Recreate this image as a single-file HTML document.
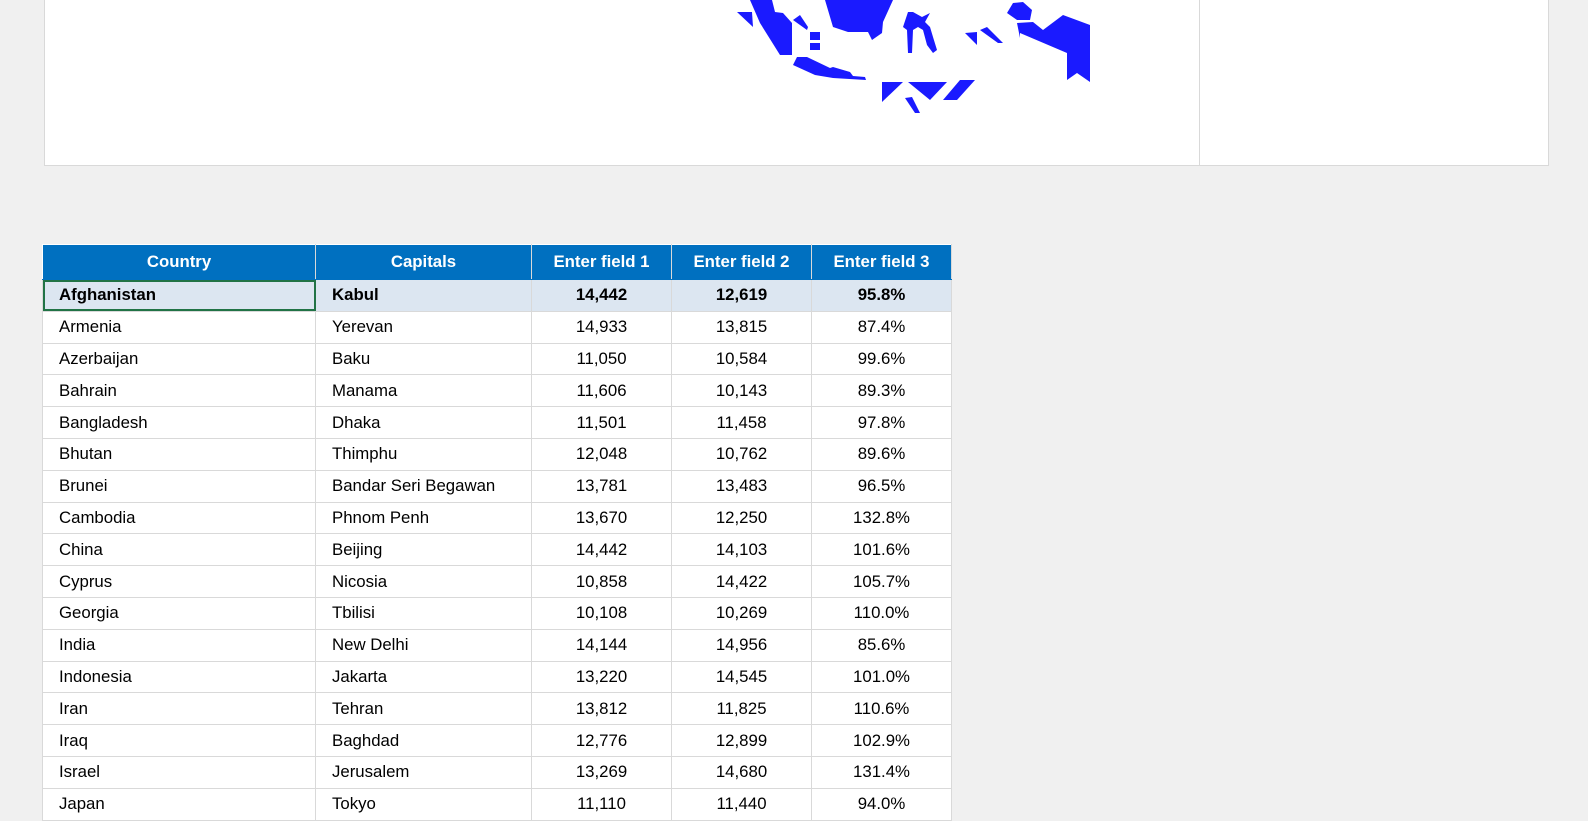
<!DOCTYPE html>
<html><head><style>
body{margin:0;width:1588px;height:802px;background:#f0f0f0;overflow:hidden;position:relative;font-family:"Liberation Sans",Arial,sans-serif}
.panel{position:absolute;left:44px;top:-1px;width:1503px;height:165px;background:#fff;border:1px solid #d9d9d9}
.div{position:absolute;left:1154px;top:0;width:1px;height:165px;background:#d9d9d9}
table{position:absolute;left:42px;top:244px;border-collapse:collapse;font-size:16.8px;color:#000;table-layout:fixed;width:909px}
td,th{border:1px solid #d9d9d9;padding:0;white-space:nowrap;overflow:hidden}
tr{height:31.8px}
tr.h{height:35px}
th{background:#0070c0;color:#fff;font-weight:bold;border-color:#fff #d9d9d9 #0070c0 #fff}
td{background:#fff}
td.l{padding-left:16px}
td.c{text-align:center}
tr.sel td{background:#dce6f1;font-weight:bold}
tr.sel td:first-child{outline:2px solid #217346;outline-offset:-2px}
</style></head><body>
<div class="panel"><div class="div"></div>
<svg width="1503" height="165" style="position:absolute;left:0;top:0" viewBox="45 0 1503 165">
<g fill="#1a1aff">
<polygon points="750,0 772,0 775,12 783,13 792,23 792,55 780,55 760,23"/>
<polygon points="737,12 752,12 753,27"/>
<polygon points="793,20 800,15 808,27 807,30"/>
<rect x="810" y="32" width="10" height="8"/><rect x="810" y="43" width="10" height="7"/>
<polygon points="825,0 893,0 883,22 882,33 872,40 868,32 848,32 833,27"/>
<polygon points="797,57 807,57 830,68 833,67 850,72 853,76 865,77 866,80 833,78 815,75 793,65"/>
<polygon points="908,12 913,12 922,17 930,13 925,22 930,27 933,37 937,50 933,53 927,45 923,30 918,27 913,30 912,53 908,53 907,30 903,27"/>
<polygon points="965,33 977,32 977,45"/>
<polygon points="980,30 987,27 1003,43 998,43"/>
<polygon points="1007,13 1013,3 1023,2 1032,10 1030,20 1017,20"/>
<polygon points="1017,23 1033,22 1043,30 1063,15 1090,25 1090,82 1077,73 1067,80 1067,53 1020,33 1020,38"/>
<polygon points="882,82 903,82 882,102"/>
<polygon points="908,82 947,82 930,100"/>
<polygon points="960,80 975,80 957,100 943,100"/>
<polygon points="905,98 912,97 920,113 915,113"/>
</g></svg></div>
<table>
<colgroup><col style="width:273px"><col style="width:216px"><col style="width:140px"><col style="width:140px"><col style="width:140px"></colgroup>
<tr class="h"><th>Country</th><th>Capitals</th><th>Enter field 1</th><th>Enter field 2</th><th>Enter field 3</th></tr>
<tr class="sel"><td class="l">Afghanistan</td><td class="l">Kabul</td><td class="c">14,442</td><td class="c">12,619</td><td class="c">95.8%</td></tr>
<tr><td class="l">Armenia</td><td class="l">Yerevan</td><td class="c">14,933</td><td class="c">13,815</td><td class="c">87.4%</td></tr>
<tr><td class="l">Azerbaijan</td><td class="l">Baku</td><td class="c">11,050</td><td class="c">10,584</td><td class="c">99.6%</td></tr>
<tr><td class="l">Bahrain</td><td class="l">Manama</td><td class="c">11,606</td><td class="c">10,143</td><td class="c">89.3%</td></tr>
<tr><td class="l">Bangladesh</td><td class="l">Dhaka</td><td class="c">11,501</td><td class="c">11,458</td><td class="c">97.8%</td></tr>
<tr><td class="l">Bhutan</td><td class="l">Thimphu</td><td class="c">12,048</td><td class="c">10,762</td><td class="c">89.6%</td></tr>
<tr><td class="l">Brunei</td><td class="l">Bandar Seri Begawan</td><td class="c">13,781</td><td class="c">13,483</td><td class="c">96.5%</td></tr>
<tr><td class="l">Cambodia</td><td class="l">Phnom Penh</td><td class="c">13,670</td><td class="c">12,250</td><td class="c">132.8%</td></tr>
<tr><td class="l">China</td><td class="l">Beijing</td><td class="c">14,442</td><td class="c">14,103</td><td class="c">101.6%</td></tr>
<tr><td class="l">Cyprus</td><td class="l">Nicosia</td><td class="c">10,858</td><td class="c">14,422</td><td class="c">105.7%</td></tr>
<tr><td class="l">Georgia</td><td class="l">Tbilisi</td><td class="c">10,108</td><td class="c">10,269</td><td class="c">110.0%</td></tr>
<tr><td class="l">India</td><td class="l">New Delhi</td><td class="c">14,144</td><td class="c">14,956</td><td class="c">85.6%</td></tr>
<tr><td class="l">Indonesia</td><td class="l">Jakarta</td><td class="c">13,220</td><td class="c">14,545</td><td class="c">101.0%</td></tr>
<tr><td class="l">Iran</td><td class="l">Tehran</td><td class="c">13,812</td><td class="c">11,825</td><td class="c">110.6%</td></tr>
<tr><td class="l">Iraq</td><td class="l">Baghdad</td><td class="c">12,776</td><td class="c">12,899</td><td class="c">102.9%</td></tr>
<tr><td class="l">Israel</td><td class="l">Jerusalem</td><td class="c">13,269</td><td class="c">14,680</td><td class="c">131.4%</td></tr>
<tr><td class="l">Japan</td><td class="l">Tokyo</td><td class="c">11,110</td><td class="c">11,440</td><td class="c">94.0%</td></tr>
</table>
</body></html>
